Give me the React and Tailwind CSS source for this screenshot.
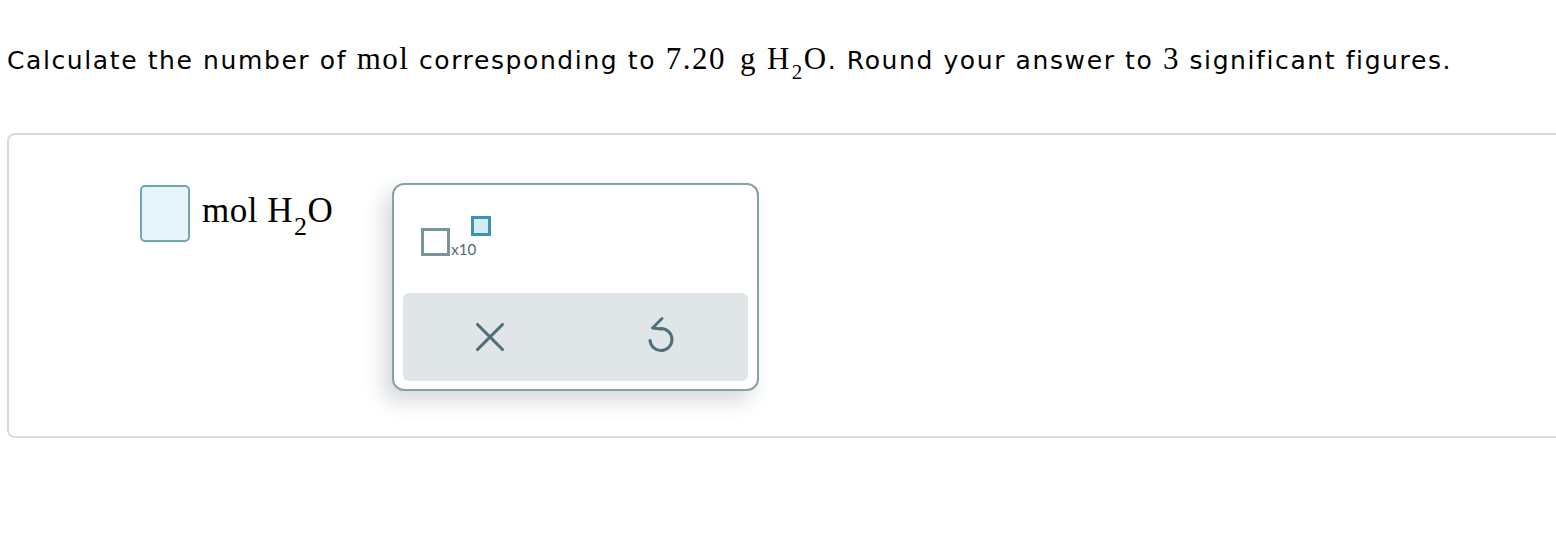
import { X } from "lucide-react";

function UndoIcon() {
  return (
    <svg width="30" height="38" viewBox="0 0 30 38" fill="none" stroke="currentColor" strokeWidth="3" strokeLinecap="round" strokeLinejoin="round">
      <path d="M15 3.5 L5.5 13 L14 14" />
      <path d="M14 13.5 A11 11 0 1 1 3 25.5" />
    </svg>
  );
}

function Math({ children, className = "" }) {
  return (
    <span className={`font-['Liberation_Serif',serif] text-[31px] tracking-[1.5px] ${className}`}>
      {children}
    </span>
  );
}

export default function App() {
  return (
    <div className="min-h-screen bg-white pl-[7px] pt-[41px] text-black">
      <p className="whitespace-nowrap text-[25px] leading-[36px] tracking-[1.6px] font-['DejaVu_Sans',Verdana,sans-serif]">
        Calculate the number of <Math>mol</Math> corresponding to <Math>7.20</Math>
        <Math className="ml-[14px]">g</Math>
        <Math className="ml-[10px]">
          H<sub className="relative top-[10px] ml-[1px] text-[21px] align-baseline">2</sub>O
        </Math>
        . Round your answer to <Math>3</Math> significant figures.
      </p>

      <div className="mt-[54px] h-[305px] rounded-l-[8px] border-2 border-r-0 border-[#d6dbde] pl-[131px] pt-[48px]">
        <div className="flex items-start">
          <div className="mt-[2px] h-[57px] w-[50px] rounded-[5px] border-2 border-[#6fa5b4] bg-[#e7f4f9]" />
          <div className="ml-[12px] mt-[8px] text-[35px] leading-[40px] tracking-[0.5px] font-['Liberation_Serif',serif]">
            mol H<sub className="relative top-[13px] ml-[1px] text-[26px] align-baseline">2</sub>O
          </div>

          <div className="ml-[59px] flex h-[208px] w-[367px] flex-col rounded-[12px] border-2 border-[#8aa0a8] bg-white px-[9px] pb-[8px] shadow-[-8px_10px_20px_rgba(60,80,90,0.22)]">
            <div className="flex flex-1 items-start pl-[18px] pt-[31px]">
              <div className="mt-[12px] h-[28px] w-[29px] border-[3px] border-[#7b939b]" />
              <span className="ml-[1px] mt-[23px] text-[15px] leading-[20px] text-[#4d6a75] font-['Lato',sans-serif]">x10</span>
              <div className="-ml-[5px] h-[20px] w-[20px] border-[3px] border-[#3a95b0] bg-[#d4edf4]" />
            </div>
            <div className="flex h-[88px] items-center rounded-[6px] bg-[#e0e5e8] text-[#4f6f7b]">
              <div className="flex flex-1 justify-center">
                <X size={50} strokeWidth={1.5} />
              </div>
              <div className="flex flex-1 justify-center pb-[6px]">
                <UndoIcon />
              </div>
            </div>
          </div>
        </div>
      </div>
    </div>
  );
}
